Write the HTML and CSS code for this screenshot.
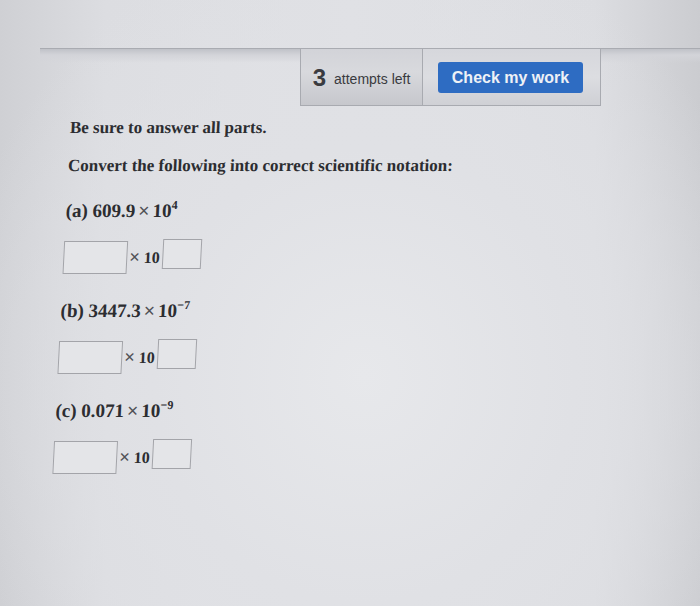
FILE: index.html
```html
<!DOCTYPE html>
<html>
<head>
<meta charset="utf-8">
<link rel="stylesheet" href="styles.css">
</head>
<body>
<div class="page">
  <div class="toolbar">
    <div class="attempts"><span class="num">3</span><span class="left">attempts left</span></div>
    <div class="check"><button class="btn">Check my work</button></div>
  </div>
  <div class="content">
    <p class="intro">Be sure to answer all parts.</p>
    <p class="prompt">Convert the following into correct scientific notation:</p>

    <div class="part">
      <div class="label">(a) 609.9<span class="times">×</span>10<sup>4</sup></div>
      <div class="row">
        <span class="box coef"></span><span class="mul"><span class="times">×</span>10</span><span class="box exp"></span>
      </div>
    </div>

    <div class="part">
      <div class="label">(b) 3447.3<span class="times">×</span>10<sup>−7</sup></div>
      <div class="row">
        <span class="box coef"></span><span class="mul"><span class="times">×</span>10</span><span class="box exp"></span>
      </div>
    </div>

    <div class="part">
      <div class="label">(c) 0.071<span class="times">×</span>10<sup>−9</sup></div>
      <div class="row">
        <span class="box coef"></span><span class="mul"><span class="times">×</span>10</span><span class="box exp"></span>
      </div>
    </div>
  </div>
</div>
</body>
</html>
```
FILE: styles.css
```css
html, body {
  margin: 0;
  padding: 0;
}
body {
  width: 700px;
  height: 606px;
  overflow: hidden;
  background:
    radial-gradient(ellipse 60% 75% at 52% 62%, #e7e8eb 0%, #e0e1e5 50%, rgba(224,225,229,0) 100%),
    linear-gradient(90deg, #cfd0d4 0%, #dcdde1 15%, #e0e1e5 50%, #dcdde1 85%, #cbccd0 100%);
  font-family: "Liberation Serif", "Times New Roman", serif;
  color: #2c2d31;
}
.page {
  padding-top: 48px;
}
.toolbar {
  margin-left: 40px;
  height: 57px;
  border-top: 1px solid #a9abb1;
  background: linear-gradient(180deg, #c0c2c8 0px, #d3d4d9 6px, rgba(220,221,225,0) 14px);
  display: flex;
  justify-content: flex-end;
  padding-right: 99px;
}
.attempts {
  width: 122px;
  height: 57px;
  box-sizing: border-box;
  border: 1px solid #a8aab0;
  border-top: none;
  border-right: none;
  background: linear-gradient(180deg, #d2d3d8 0%, #d8d9dd 40%, #c6c7cc 100%);
  display: flex;
  align-items: center;
  justify-content: center;
  gap: 8px;
  padding-top: 1px;
  font-family: "Liberation Sans", Arial, sans-serif;
  color: #3a3b40;
}
.num {
  font-size: 24px;
  font-weight: bold;
  line-height: 24px;
}
.left {
  font-size: 14px;
  line-height: 14px;
  padding-top: 3px;
}
.check {
  width: 179px;
  height: 57px;
  box-sizing: border-box;
  border: 1px solid #a8aab0;
  border-top: none;
  background: linear-gradient(180deg, #d6d7dc 0%, #dcdde1 50%, #cfd0d5 100%);
  padding: 13px 18px 0 15px;
}
.btn {
  display: block;
  width: 145px;
  height: 31px;
  margin: 0;
  border: none;
  border-radius: 3px;
  background: #2e6cc2;
  color: #eef1f6;
  font-family: "Liberation Sans", Arial, sans-serif;
  font-weight: bold;
  font-size: 16px;
  padding: 0;
  line-height: 31px;
}
.content {
  padding-left: 71px;
  padding-top: 13px;
  transform: skewX(-2.9deg);
  transform-origin: 0 0;
  font-weight: bold;
  font-size: 17px;
}
.content p {
  margin: 0;
  line-height: 18px;
}
.prompt {
  margin-top: 20px !important;
}
.part {
  margin-top: 26px;
}
.part + .part {
  margin-top: 25px;
}
.label {
  font-size: 19px;
  line-height: 20px;
  height: 20px;
  white-space: nowrap;
}
.label sup {
  font-size: 12px;
  line-height: 0;
  vertical-align: 8px;
}
.times {
  font-family: "Liberation Sans", Arial, sans-serif;
  font-weight: normal;
  font-size: 19px;
  line-height: 0;
  color: #505156;
  margin: 0 3px 0 3px;
}
.row {
  margin-top: 18px;
  display: flex;
  align-items: flex-start;
  height: 37px;
}
.box {
  display: block;
  box-sizing: border-box;
  border: 1px solid #a3a4a9;
  background: #e4e5e8;
}
.coef {
  width: 64px;
  height: 33px;
  margin-top: 2px;
}
.exp {
  width: 39px;
  height: 30px;
}
.mul {
  margin-left: 2px;
  margin-right: 2px;
  margin-top: 10px;
  line-height: 18px;
  font-size: 16px;
}
.mul .times {
  font-size: 18px;
  margin: 0 4px 0 0;
}
```
